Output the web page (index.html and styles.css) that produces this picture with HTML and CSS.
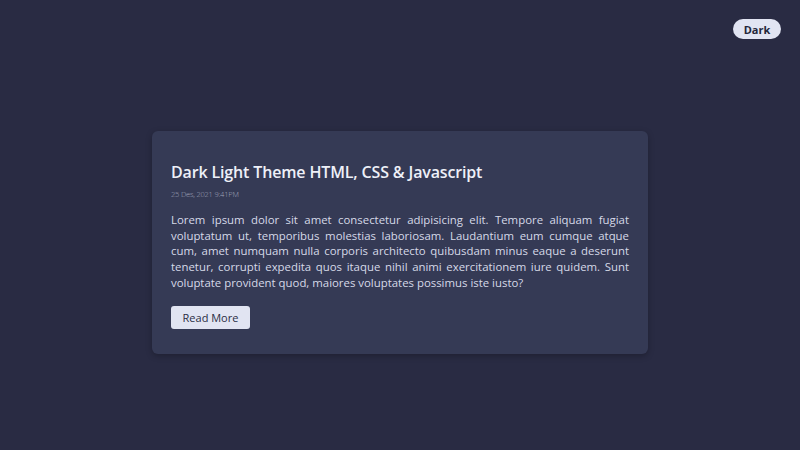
FILE: index.html
```html
<!DOCTYPE html>
<html>
<head>
<meta charset="utf-8">
<link rel="stylesheet" href="styles.css">
</head>
<body>
<header class="top">
  <button class="toggle">Dark</button>
</header>
<main class="main">
  <article class="card">
    <h1 class="title">Dark Light Theme HTML, CSS &amp; Javascript</h1>
    <p class="date">25 Des, 2021 9:41PM</p>
    <p class="text">Lorem ipsum dolor sit amet consectetur adipisicing elit. Tempore aliquam fugiat voluptatum ut, temporibus molestias laboriosam. Laudantium eum cumque atque cum, amet numquam nulla corporis architecto quibusdam minus eaque a deserunt tenetur, corrupti expedita quos itaque nihil animi exercitationem iure quidem. Sunt voluptate provident quod, maiores voluptates possimus iste iusto?</p>
    <button class="more">Read More</button>
  </article>
</main>
</body>
</html>
```
FILE: styles.css
```css
* { box-sizing: border-box; }
html, body { margin: 0; height: 100%; }
body {
  background: #292b43;
  font-family: "Open Sans", "Noto Sans", sans-serif;
  color: #e4e6f2;
}
.top {
  display: flex;
  justify-content: flex-end;
  padding: 19px 19px 0 0;
}
.toggle {
  background: #e1e4f2;
  color: #23263a;
  border: none;
  border-radius: 11px;
  height: 20px;
  width: 48px;
  padding: 0;
  font-family: inherit;
  font-size: 11px;
  font-weight: 700;
}
.main {
  display: flex;
  justify-content: center;
  padding-top: 92px;
}
.card {
  width: 496px;
  height: 223px;
  background: #353a55;
  border-radius: 6px;
  padding: 29px 19px 0 19px;
  box-shadow: 0 2px 6px rgba(0,0,0,0.25);
}
.title {
  margin: 0;
  font-size: 16px;
  letter-spacing: -0.15px;
  font-weight: 600;
  line-height: 24px;
  color: #eef0f8;
}
.date {
  margin: 4px 0 0;
  font-size: 7.5px;
  letter-spacing: -0.2px;
  line-height: 12px;
  color: #a3a7bd;
  font-weight: 300;
}
.text {
  margin: 12px 0 0;
  font-size: 11.4px;
  line-height: 15.7px;
  text-align: justify;
  color: #d6d9e8;
}
.more {
  margin-top: 15px;
  width: 79px;
  height: 23px;
  background: #e1e4f2;
  color: #2b2e45;
  border: none;
  border-radius: 3px;
  padding: 0;
  font-family: inherit;
  font-size: 11px;
}
```
